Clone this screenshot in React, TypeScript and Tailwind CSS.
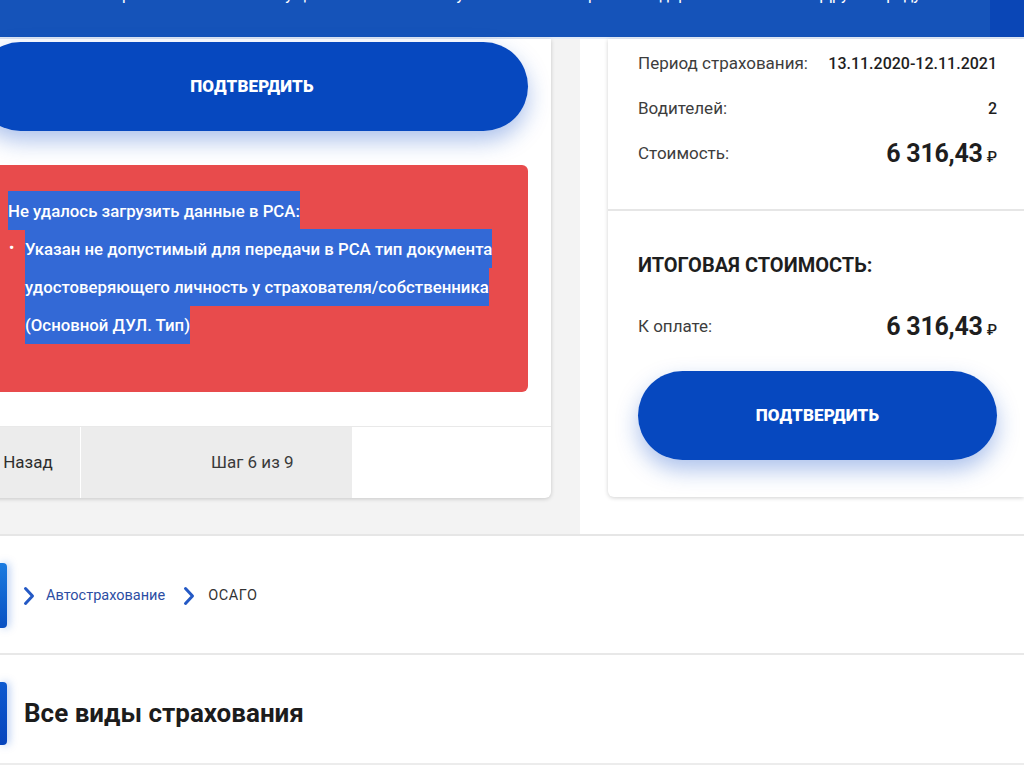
import { ReactNode } from "react";

const navItems = [
    { label: "Автострахование", w: "w-[192px]" },
    { label: "Имущество", w: "w-[183px]" },
    { label: "Путешествия и спорт", w: "w-[205px]" },
    { label: "Здоровье", w: "w-[170px]" },
    { label: "Другие продукты", w: "w-[165px]" },
];

function Chevron() {
    return (
        <svg className="w-[12px] h-[20px] shrink-0" viewBox="0 0 12 20" fill="none">
            <path d="M2.5 2.5 L9.5 10 L2.5 17.5" stroke="#2459c5" strokeWidth={3} strokeLinecap="round" strokeLinejoin="round" />
        </svg>
    );
}

function ConfirmButton({ className }: { className: string }) {
    return (
        <button className={`h-[89px] rounded-full bg-[#0648bf] text-white text-[17px] font-black uppercase tracking-[0.01em] shadow-[0_10px_22px_rgba(20,80,200,0.35)] ${className}`}>
            Подтвердить
        </button>
    );
}

function Sel({ children }: { children: ReactNode }) {
    // имитация выделенного текста
    return <span className="bg-[#3369d6] py-[9.5px] box-decoration-clone">{children}</span>;
}

function Row({ label, children }: { label: string; children: ReactNode }) {
    return (
        <div className="h-[45px] flex items-center justify-between">
            <span className="text-[17px] text-[#3d3d3d]">{label}</span>
            {children}
        </div>
    );
}

function Price() {
    return (
        <span className="flex items-baseline text-[#1e1e1e]">
            <span className="text-[25px] font-bold tracking-[-0.01em]">6 316,43</span>
            <span className="ml-[4px] text-[15px] font-medium">₽</span>
        </span>
    );
}

export default function App() {
    return (
        <div className="w-[1024px] h-[768px] overflow-hidden bg-white font-['Roboto',sans-serif]">
            {/* шапка */}
            <header className="h-[37px] flex bg-[#1553b9] overflow-hidden">
                <nav className="flex flex-1 pl-[70px]">
                    {navItems.map((item, i) => (
                        <div key={item.label} className={`${item.w} shrink-0 flex whitespace-nowrap text-white text-[16px] leading-[20px] -mt-[15px]`}>
                            <span>{item.label}</span>
                            {i === navItems.length - 1 && <span className="ml-[4px]">⌄</span>}
                        </div>
                    ))}
                </nav>
                <div className="w-[34px] bg-[#0a46b6]" />
            </header>
            <div className="h-[2px] bg-[#e3ebf8]" />

            {/* основной блок */}
            <div className="flex h-[497px] border-b-2 border-[#e6e6e6]">
                <div className="w-[580px] shrink-0 bg-[#f3f3f3]">
                    <div className="-ml-[24px] w-[575px] bg-white rounded-br-[6px] shadow-[0_1px_4px_rgba(0,0,0,0.18)]">
                        <div className="pr-[23px] pt-[3px]">
                            <ConfirmButton className="w-full block" />
                            <div className="mt-[34px] h-[227px] bg-[#e84b4c] rounded-r-[6px] pl-[32px] pr-[12px] pt-[26px] text-white text-[16.8px] font-medium leading-[38px]">
                                <p>
                                    <Sel>Не удалось загрузить данные в РСА:</Sel>
                                </p>
                                <div className="flex">
                                    <span className="w-[17px] shrink-0 text-[15px] pl-[1px]">•</span>
                                    <span>
                                        <Sel>Указан не допустимый для передачи в РСА тип документа удостоверяющего личность у страхователя/собственника (Основной ДУЛ. Тип)</Sel>
                                    </span>
                                </div>
                            </div>
                        </div>
                        <div className="mt-[34px] h-[72px] border-t border-[#e9e9e9] flex text-[17px] text-[#2e2e2e]">
                            <div className="w-[104px] bg-[#ececec] flex items-center justify-center">Назад</div>
                            <div className="w-[1px] bg-white" />
                            <div className="w-[271px] bg-[#ececec] flex items-center pl-[130px] text-[#3a3a3a]">Шаг 6 из 9</div>
                        </div>
                    </div>
                </div>

                <div className="flex-1 bg-white">
                    <div className="ml-[28px] bg-white rounded-bl-[6px] shadow-[0_1px_4px_rgba(0,0,0,0.18)]">
                        <div className="pl-[30px] pr-[27px] pt-[2px] pb-[33px]">
                            <Row label="Период страхования:">
                                <span className="text-[16px] font-medium text-[#1e1e1e]">13.11.2020-12.11.2021</span>
                            </Row>
                            <Row label="Водителей:">
                                <span className="text-[16px] font-medium text-[#1e1e1e]">2</span>
                            </Row>
                            <Row label="Стоимость:">
                                <Price />
                            </Row>
                        </div>
                        <div className="border-t-2 border-[#e6e6e6] pl-[30px] pr-[27px] pt-[42px] pb-[37px]">
                            <h3 className="text-[20px] leading-[24px] font-bold uppercase text-[#1e1e1e]">Итоговая стоимость:</h3>
                            <div className="mt-[27px]">
                                <Row label="К оплате:">
                                    <Price />
                                </Row>
                            </div>
                            <ConfirmButton className="mt-[22px] w-full block" />
                        </div>
                    </div>
                </div>
            </div>

            {/* хлебные крошки */}
            <div className="h-[119px] pt-[2px] flex items-center border-b-2 border-[#e8e8e8]">
                <div className="w-[7px] h-[65px] rounded-r-[4px] bg-gradient-to-b from-[#1b7be0] to-[#0a50c2] shadow-[2px_0_8px_rgba(20,90,210,0.35)]" />
                <div className="ml-[16px] flex items-center text-[14.5px]">
                    <Chevron />
                    <span className="ml-[11px] text-[#2c4da3]">Автострахование</span>
                    <span className="ml-[18px]"><Chevron /></span>
                    <span className="ml-[13px] text-[#333] uppercase tracking-[0.04em]">ОСАГО</span>
                </div>
            </div>

            {/* заголовок */}
            <div className="h-[110px] pt-[8px] flex items-center border-b-2 border-[#ececec]">
                <div className="w-[7px] h-[63px] rounded-r-[4px] bg-gradient-to-b from-[#0d5ad0] to-[#0644bc] shadow-[2px_0_8px_rgba(20,90,210,0.35)]" />
                <h2 className="ml-[17px] text-[26px] font-bold text-[#1c1c1c]">Все виды страхования</h2>
            </div>
        </div>
    );
}
